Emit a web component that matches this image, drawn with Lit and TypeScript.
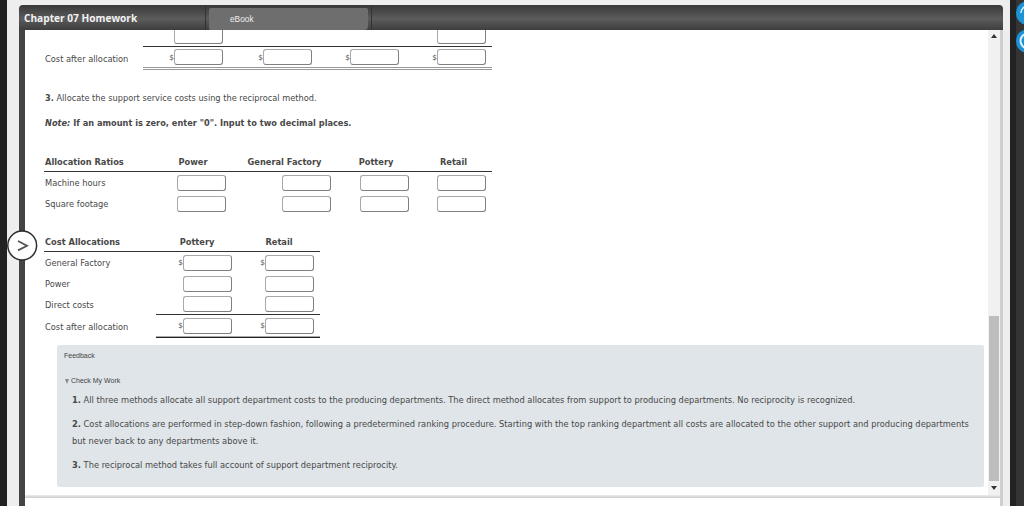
import { LitElement, css, html } from 'lit';
import { customElement } from 'lit/decorators.js';

const box = (dollar = false) =>
  html`${dollar ? html`<i>$</i>` : ""}<span class="inp"></span>`;

const cell = (cls: string, dollar = false) =>
  html`<div class="c num ${cls}">${box(dollar)}</div>`;

@customElement("app-root")
export class AppRoot extends LitElement {
  static styles = css`
    :host {
      display: flex;
      position: relative;
      width: 1024px;
      height: 506px;
      overflow: hidden;
      background: #eeeeee;
      font-family: "DejaVu Sans", Verdana, sans-serif;
      font-size: 8.22px;
      color: #484848;
    }
    .rail { width: 7px; flex: none; background: #222; }
    .rail-r {
      width: 14px;
      flex: none;
      margin-left: 7px;
      background: linear-gradient(90deg, #222 6px, #343434 6px);
    }
    .panel {
      margin: 5px 0 0 12px;
      width: 984px;
      flex: none;
      display: flex;
      flex-direction: column;
    }
    .head {
      height: 25px;
      flex: none;
      display: flex;
      border-radius: 4px 4px 0 0;
      background: linear-gradient(#383838, #5c5c5c 55%, #3e3e3e);
    }
    .title {
      width: 186px;
      padding: 6px 0 0 5px;
      box-sizing: border-box;
      font: bold 10.15px "Open Sans", sans-serif;
      color: #f2f2f2;
    }
    .tabwrap {
      padding: 3px 3px 0;
      border-left: 1px solid #333;
      border-right: 1px solid #333;
    }
    .tab {
      width: 159px;
      height: 22px;
      background: #6e6e6e;
      border-radius: 2px 2px 4px 2px;
      color: #f0f0f0;
      font: 8.3px/22px "Liberation Sans", sans-serif;
      padding-left: 21px;
      box-sizing: border-box;
    }
    .main {
      flex: 1;
      display: flex;
      flex-direction: column;
      border-left: 6px solid #444;
      border-right: 3px solid #cfcfcf;
      background: #fff;
    }
    .body { display: flex; height: 465px; flex: none; }
    .foot {
      flex: 1;
      background: linear-gradient(#ececec, #cdcdcd 3px, #fff 3px);
    }
    .scroll { width: 963px; flex: none; overflow: hidden; }
    .inner { padding-left: 19px; display: flex; flex-direction: column; }

    .bar { width: 12px; flex: none; background: #f1f1f1; display: flex; flex-direction: column; }
    .arrow { flex: none; height: 11px; display: flex; justify-content: center; align-items: center; }
    .arrow.down { height: 14px; }
    .arrow::before {
      content: "";
      border-left: 3px solid transparent;
      border-right: 3px solid transparent;
      border-bottom: 4px solid #333;
    }
    .arrow.down::before { border-bottom: 0; border-top: 4px solid #333; }
    .gap { flex: 1; }
    .thumb { flex: none; height: 165px; margin: 0 1px; background: #bdbdbd; }

    .grid { display: grid; width: 448px; font-size: 8.27px; }
    .t1 { grid-template-columns: 99px 86px 89px 87px 87px; margin-top: -5px; }
    .t2 { grid-template-columns: 110px 78px 105px 78px 77px; margin-top: 21px; }
    .t3 { grid-template-columns: 112px 82px 82px; width: 276px; margin-top: 18px; }

    .c { height: 21px; box-sizing: border-box; display: flex; align-items: center; }
    .lb { padding-left: 1px; }
    .num { justify-content: flex-end; padding-right: 6px; }
    .num i { font-style: normal; font-size: 7.5px; color: #555; }
    .h {
      height: 20px;
      font-weight: bold;
      justify-content: center;
      border-bottom: 1px solid #333;
    }
    .h.lb { justify-content: flex-start; }
    .sub { border-bottom: 1px solid #333; }
    .first { height: 22px; }
    .tot { height: 23px; border-bottom: 3px double #999; }
    .tot2 { height: 23px; border-bottom: 1px solid #222; padding-bottom: 1px; box-shadow: inset 0 -1px #aaa; }
    .inp {
      display: block;
      width: 49px;
      height: 16px;
      box-sizing: border-box;
      border: 1px solid #a8a8a8;
      border-right-color: #808080;
      border-bottom-color: #808080;
      border-radius: 3px;
      background: #fff;
    }

    p { margin: 0; line-height: 17px; }
    .q { padding-left: 1px; }
    .q1 { margin-top: 20px; }
    .q2 { margin-top: 8px; margin-bottom: -1px; }

    .fb {
      width: 927px;
      height: 142px;
      box-sizing: border-box;
      margin: 7px 0 0 13px;
      padding: 6px 12px 0 7px;
      background: #dfe5e8;
      border-radius: 2px;
      font-size: 8.31px;
    }
    .small { font: 7px/10px "Liberation Sans", sans-serif; color: #444; display: flex; align-items: center; }
    .chk { margin-top: 15px; }
    .chk::before {
      content: "";
      margin: 0 2px 0 1px;
      border-left: 2.5px solid transparent;
      border-right: 2.5px solid transparent;
      border-top: 5px solid #8a8a8a;
    }
    .fb p { padding-left: 8px; }
    .f1 { margin-top: 6px; }
    .f2 { margin-top: 7px; }

    .pull { position: absolute; left: 7px; top: 230px; width: 31px; height: 31px; }
    .badge { position: absolute; left: 1016px; width: 24px; height: 24px; }
  `;

  render() {
    return html`
      <div class="rail"></div>
      <div class="panel">
        <div class="head">
          <div class="title">Chapter 07 Homework</div>
          <div class="tabwrap"><div class="tab">eBook</div></div>
        </div>
        <div class="main">
          <div class="body">
            <div class="scroll">
              <div class="inner">
                ${this.renderFirstTable()}
                <p class="q q1"><b>3.</b> Allocate the support service costs using the reciprocal method.</p>
                <p class="q q2"><b><i>Note:</i> If an amount is zero, enter "0". Input to two decimal places.</b></p>
                ${this.renderRatios()}
                ${this.renderAllocations()}
                ${this.renderFeedback()}
              </div>
            </div>
            <div class="bar">
              <div class="arrow"></div>
              <div class="gap"></div>
              <div class="thumb"></div>
              <div class="arrow down"></div>
            </div>
          </div>
          <div class="foot"></div>
        </div>
      </div>
      <div class="rail-r"></div>

      <svg class="pull" viewBox="0 0 31 31">
        <circle cx="15.2" cy="15.5" r="14.4" fill="#fff" stroke="#2e2e2e" stroke-width="1.5" />
        <path d="M11 11L20 15.7L11 20.4" fill="none" stroke="#555" stroke-width="1.8" />
      </svg>
      <svg class="badge" style="top: 1px" viewBox="0 0 24 24">
        <circle cx="12" cy="12" r="12" fill="#1c93d6" />
        <path d="M5 12A7 7 0 0 1 12 5" fill="none" stroke="#dff1fb" stroke-width="1.5" />
      </svg>
      <svg class="badge" style="top: 29px" viewBox="0 0 24 24">
        <circle cx="12" cy="12" r="12" fill="#1c93d6" />
        <circle cx="12" cy="12" r="7.5" fill="none" stroke="#dff1fb" stroke-width="2" />
      </svg>
    `;
  }

  renderFirstTable() {
    return html`
      <div class="grid t1">
        <div class="c first sub" style="border-bottom: 0"></div>
        ${cell("first sub")}
        <div class="c first sub"></div>
        <div class="c first sub"></div>
        ${cell("first sub")}
        <div class="c lb tot" style="border-bottom: 0">Cost after allocation</div>
        ${cell("tot", true)}${cell("tot", true)}${cell("tot", true)}${cell("tot", true)}
      </div>
    `;
  }

  renderRatios() {
    const rows = ["Machine hours", "Square footage"];
    return html`
      <div class="grid t2">
        <div class="c h lb">Allocation Ratios</div>
        <div class="c h">Power</div>
        <div class="c h">General Factory</div>
        <div class="c h">Pottery</div>
        <div class="c h">Retail</div>
        ${rows.map(
          (r) => html`<div class="c lb">${r}</div>${cell("")}${cell("")}${cell("")}${cell("")}`
        )}
      </div>
    `;
  }

  renderAllocations() {
    return html`
      <div class="grid t3">
        <div class="c h lb">Cost Allocations</div>
        <div class="c h">Pottery</div>
        <div class="c h">Retail</div>
        <div class="c lb">General Factory</div>${cell("", true)}${cell("", true)}
        <div class="c lb">Power</div>${cell("")}${cell("")}
        <div class="c lb">Direct costs</div>${cell("sub")}${cell("sub")}
        <div class="c lb" style="height: 23px">Cost after allocation</div>
        ${cell("tot2", true)}${cell("tot2", true)}
      </div>
    `;
  }

  renderFeedback() {
    return html`
      <div class="fb">
        <div class="small">Feedback</div>
        <div class="small chk">Check My Work</div>
        <p class="f1"><b>1.</b> All three methods allocate all support department costs to the producing departments. The direct method allocates from support to producing departments. No reciprocity is recognized.</p>
        <p class="f2"><b>2.</b> Cost allocations are performed in step-down fashion, following a predetermined ranking procedure. Starting with the top ranking department all costs are allocated to the other support and producing departments but never back to any departments above it.</p>
        <p class="f2"><b>3.</b> The reciprocal method takes full account of support department reciprocity.</p>
      </div>
    `;
  }
}
